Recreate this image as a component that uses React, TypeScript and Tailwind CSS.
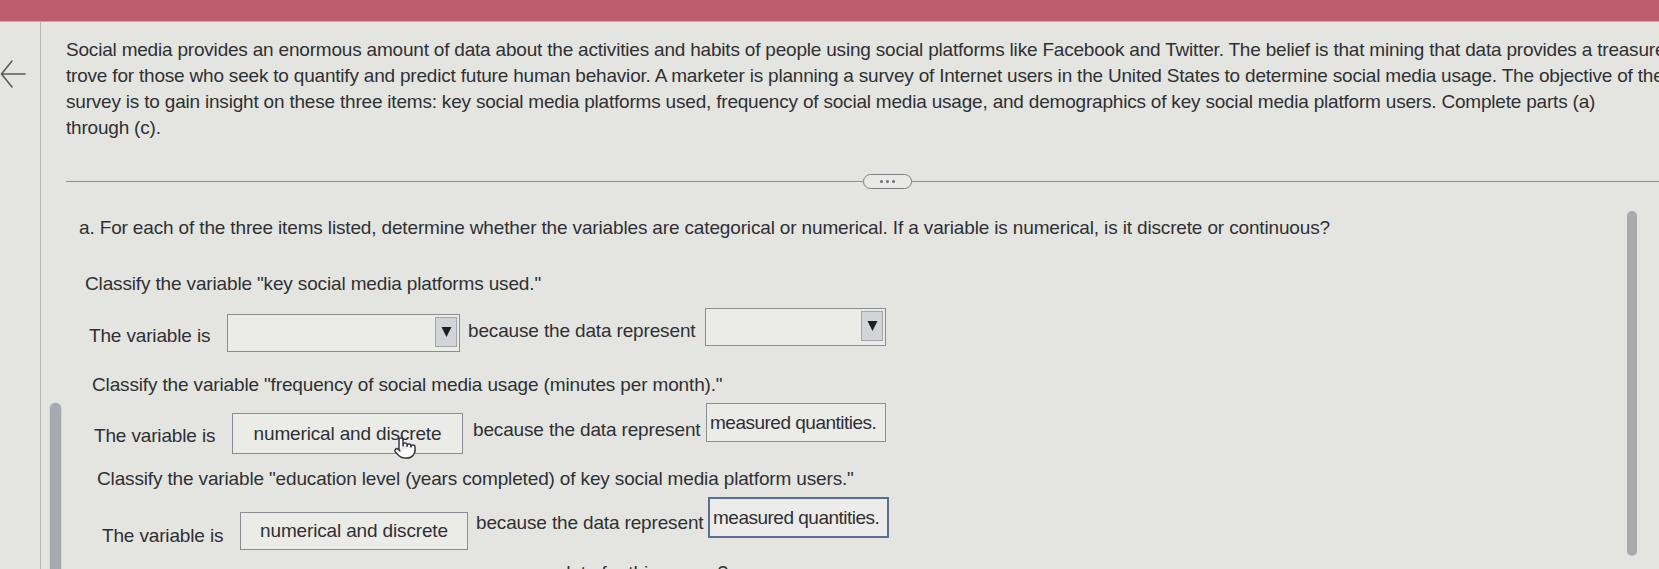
import React from "react";
import { Pointer } from "lucide-react";

const para = [
  "Social media provides an enormous amount of data about the activities and habits of people using social platforms like Facebook and Twitter. The belief is that mining that data provides a treasure",
  "trove for those who seek to quantify and predict future human behavior. A marketer is planning a survey of Internet users in the United States to determine social media usage. The objective of the",
  "survey is to gain insight on these three items: key social media platforms used, frequency of social media usage, and demographics of key social media platform users. Complete parts (a)",
  "through (c).",
];

function DropArrow() {
  return (
    <div className="w-[22px] h-[30px] bg-[#d3d4d7] border border-[#a3a5aa] flex items-center justify-center">
      <svg width="11" height="12" viewBox="0 0 11 12">
        <path d="M0.5 1 L10.5 1 L5.5 11 Z" fill="#1f1f22" />
      </svg>
    </div>
  );
}

export default function App() {
  return (
    <div className="w-[1659px] h-[569px] overflow-hidden bg-[#e4e5e1] text-[#2f3034] font-['Liberation_Sans',Arial,sans-serif] flex flex-col">
      <div className="h-[22px] shrink-0 bg-[#bd5c6d] border-b border-[#d3a3ab]" />
      <div className="flex flex-1 min-h-0">
        <div className="w-[41px] shrink-0 border-r border-[#b3b4b3] pt-[36px]">
          <svg width="26" height="32" viewBox="0 0 26 32" className="text-[#5a5b5f]">
            <path d="M25 16 H1.5 M12 3 L1.5 16 L12 29" stroke="currentColor" strokeWidth="1.6" fill="none" strokeLinecap="round" strokeLinejoin="round" />
          </svg>
        </div>
        <div className="flex-1 relative flex flex-col">
          {/* paragraph */}
          <div className="pt-[15px] pl-[25px] text-[19px] leading-[26px] tracking-[-0.2px] whitespace-nowrap">
            {para.map((l, i) => (
              <div key={i}>{l}</div>
            ))}
          </div>

          {/* separator */}
          <div className="mt-[33px] h-[15px] flex items-center pl-[25px]">
            <div className="w-[797px] h-[1.5px] bg-[#8e9090]" />
            <div className="w-[49px] h-[15px] rounded-full border-[1.5px] border-[#7d7f82] bg-[#e9eae7] flex items-center justify-center gap-[3px]">
              <span className="w-[3px] h-[3px] rounded-full bg-[#6c6e72]" />
              <span className="w-[3px] h-[3px] rounded-full bg-[#6c6e72]" />
              <span className="w-[3px] h-[3px] rounded-full bg-[#6c6e72]" />
            </div>
            <div className="flex-1 h-[1.5px] bg-[#8e9090]" />
          </div>

          <div className="text-[19px] leading-[26px] tracking-[-0.15px] whitespace-nowrap">
            <div className="mt-[26px] pl-[38px]">
              a. For each of the three items listed, determine whether the variables are categorical or numerical. If a variable is numerical, is it discrete or continuous?
            </div>
            <div className="mt-[30px] pl-[44px]">Classify the variable "key social media platforms used."</div>

            {/* Row 1 */}
            <div className="mt-[11px] pl-[48px] flex items-start">
              <span className="w-[138px] mt-[15px]">The variable is</span>
              <div className="mt-[6px] w-[233px] h-[38px] border-[1.5px] border-[#8b8d92] bg-[#ebebe8] flex justify-end items-start pt-[2px] pr-[2px]">
                <DropArrow />
              </div>
              <span className="ml-[8px] w-[237px] mt-[10px]">because the data represent</span>
              <div className="w-[181px] h-[38px] border-[1.5px] border-[#8b8d92] bg-[#ebebe8] flex justify-end items-start pt-[2px] pr-[2px]">
                <DropArrow />
              </div>
            </div>

            <div className="mt-[20px] pl-[51px]">Classify the variable "frequency of social media usage (minutes per month)."</div>

            {/* Row 2 */}
            <div className="mt-[5px] pl-[53px] flex items-start">
              <span className="w-[138px] mt-[20px]">The variable is</span>
              <div className="relative mt-[10px] w-[231px] h-[41px] border-[1.5px] border-[#8b8d92] bg-[#ebebe8] flex items-center justify-center">
                numerical and discrete
                <Pointer className="absolute left-[160px] top-[22px]" size={24} strokeWidth={1.5} color="#3a3b3f" fill="#ffffff" />
              </div>
              <span className="ml-[10px] w-[233px] mt-[14px]">because the data represent</span>
              <div className="w-[180px] h-[39px] border-[1.5px] border-[#8b8d92] bg-[#ebebe8] flex items-center pl-[3px] tracking-[-0.5px]">
                measured quantities.
              </div>
            </div>

            <div className="mt-[12px] pl-[56px]">
              Classify the variable "education level (years completed) of key social media platform users."
            </div>

            {/* Row 3 */}
            <div className="mt-[5px] pl-[61px] flex items-start">
              <span className="w-[138px] mt-[26px]">The variable is</span>
              <div className="mt-[15px] w-[228px] h-[38px] border-[1.5px] border-[#8b8d92] bg-[#ebebe8] flex items-center justify-center">
                numerical and discrete
              </div>
              <span className="ml-[8px] w-[232px] mt-[13px]">because the data represent</span>
              <div className="w-[181px] h-[41px] border-2 border-[#5b6e96] bg-[#ecedea] flex items-center pl-[3px] tracking-[-0.5px]">
                measured quantities.
              </div>
            </div>

            <div className="mt-[10px] pl-[519px]">data for this survey?</div>
          </div>

          {/* scroll thumbs */}
          <div className="absolute left-[8px] top-[380px] w-[13px] h-[200px] rounded-full bg-[#a7a8b0] border border-[#d2d3d6]" />
          <div className="absolute left-[1586px] top-[189px] w-[10px] h-[345px] rounded-full bg-[#a9aaac]" />
        </div>
      </div>
    </div>
  );
}
